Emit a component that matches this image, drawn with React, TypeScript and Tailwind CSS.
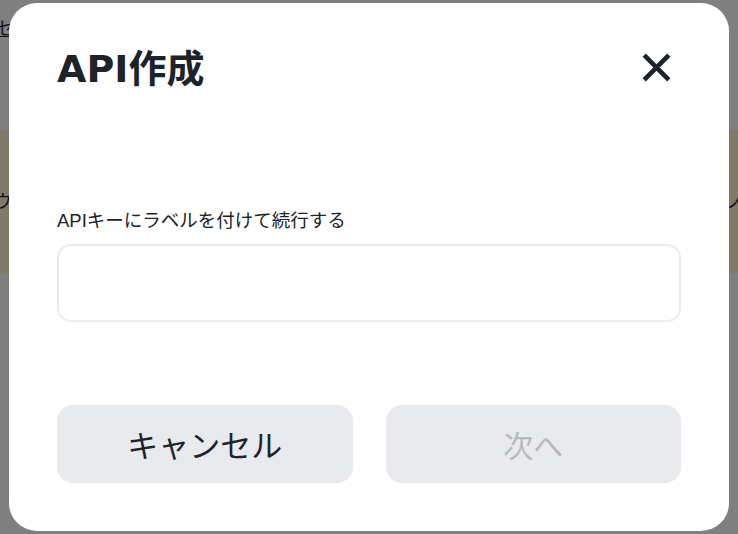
import React, { useState } from 'react';

const CloseIcon = () => (
  <svg width="29" height="29" viewBox="0 0 29 29" fill="none" aria-hidden="true">
    <path d="M2.2 2.2 L26.8 26.8 M26.8 2.2 L2.2 26.8" stroke="#1e2329" strokeWidth="4.6" strokeLinecap="butt" />
  </svg>
);

export default function App() {
  const [label, setLabel] = useState('');

  return (
    <div
      className="relative w-[738px] h-[534px] overflow-hidden bg-white"
      style={{ fontFamily: '"Noto Sans CJK JP", "Noto Sans", sans-serif' }}
    >
      {/* page behind the dialog */}
      <div className="flex flex-col">
        <div className="h-[130px] pt-[14px] -ml-[4px]">
          <span className="text-[18px] text-[#1e2329] underline">セキュリティ</span>
        </div>
        <div className="h-[144px] bg-[#fcf5d2] flex items-center justify-between -mx-[6px] pb-[4px]">
          <span className="text-[18px] text-[#1e2329]">ウ</span>
          <span className="text-[18px] text-[#1e2329]">ノ</span>
        </div>
      </div>

      {/* overlay */}
      <div className="absolute inset-0 bg-black/50 flex items-center justify-center">
        <div className="w-[720px] h-[528px] bg-white rounded-[28px] px-12 pt-[47px] pb-12 flex flex-col">
          {/* header */}
          <div className="h-[40px] flex items-center justify-between">
            <h2
              className="text-[38px] leading-[40px] font-bold text-[#1e2329] -mt-[3px]"
              style={{ fontFamily: '"DejaVu Sans", "Noto Sans CJK JP", sans-serif' }}
            >
              API作成
            </h2>
            <button className="w-[40px] h-[40px] flex items-center justify-center mr-[5px] -mt-[6px]" aria-label="閉じる">
              <CloseIcon />
            </button>
          </div>

          {/* form */}
          <label
            className="mt-[118px] text-[18.5px] leading-[26px] text-[#1e2329]"
            style={{ fontFamily: '"Liberation Sans", "Noto Sans CJK JP", sans-serif' }}
          >
            APIキーにラベルを付けて続行する
          </label>
          <input
            value={label}
            onChange={(e) => setLabel(e.target.value)}
            className="mt-[10px] h-[78px] w-full rounded-[14px] border-2 border-[#eaecef] px-4 text-[20px] text-[#1e2329] outline-none"
          />

          {/* actions */}
          <div className="mt-auto grid grid-cols-2 gap-[33px]">
            <button className="h-[78px] rounded-[16px] bg-[#e9eaed] text-[31px] text-[#1e2329]">
              キャンセル
            </button>
            <button disabled className="h-[78px] rounded-[16px] bg-[#e9eaed] text-[30px] text-[#b7b9bd]">
              次へ
            </button>
          </div>
        </div>
      </div>
    </div>
  );
}
